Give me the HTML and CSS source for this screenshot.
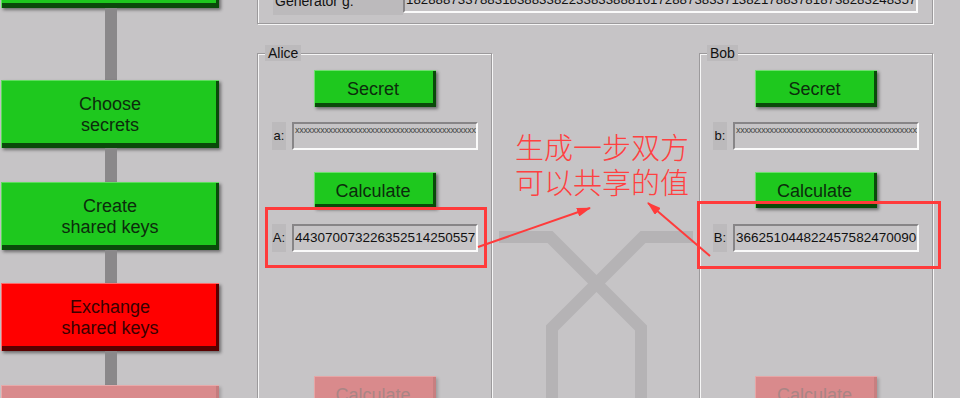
FILE: index.html
```html
<!DOCTYPE html>
<html lang="en">

<head>
  <meta charset="UTF-8">
  <title>Diffie-Hellman key exchange</title>
  <link rel="stylesheet" href="styles.css">
</head>

<body>
  <div class="app">
    <nav class="steps">
      <div class="step">Public<br>parameters</div>
      <div class="link link-long"></div>
      <div class="step">Choose<br>secrets</div>
      <div class="link"></div>
      <div class="step">Create<br>shared keys</div>
      <div class="link link-short"></div>
      <div class="step step-red">Exchange<br>shared keys</div>
      <div class="link"></div>
      <div class="step step-off">Calculate<br>final key</div>
    </nav>

    <main class="main">
      <div class="params frame">
        <span class="tag tag-wide">Generator g:</span>
        <div class="field field-wide">182888733788318388338223383388816172887383371382178837818738283248357</div>
      </div>

      <div class="parties">
        <fieldset class="party frame">
          <legend>Alice</legend>
          <div class="party-body">
            <button class="btn">Secret</button>
            <div class="row">
              <span class="tag">a:</span>
              <div class="field mask">xxxxxxxxxxxxxxxxxxxxxxxxxxxxxxxxxxxxxxxxxxxx</div>
            </div>
            <button class="btn btn-calc">Calculate</button>
            <div class="row row-key">
              <span class="tag">A:</span>
              <div class="field">443070073226352514250557</div>
            </div>
            <button class="btn btn-off">Calculate</button>
          </div>
        </fieldset>

        <div class="swap">
          <p class="note">生成一步双方<br>可以共享的值</p>
          <svg class="cross" width="207" height="180" viewBox="0 0 207 180">
            <path d="M7 12 H58 L149 103 V180" />
            <path d="M201 12 H151 L60 103 V180" />
          </svg>
        </div>

        <fieldset class="party party-bob frame">
          <legend>Bob</legend>
          <div class="party-body">
            <button class="btn">Secret</button>
            <div class="row">
              <span class="tag">b:</span>
              <div class="field mask">xxxxxxxxxxxxxxxxxxxxxxxxxxxxxxxxxxxxxxxxxxxx</div>
            </div>
            <button class="btn btn-calc">Calculate</button>
            <div class="row row-key">
              <span class="tag">B:</span>
              <div class="field">366251044822457582470090</div>
            </div>
            <button class="btn btn-off">Calculate</button>
          </div>
        </fieldset>
      </div>
    </main>
  </div>

  <!-- annotation layer drawn on top of the screenshot -->
  <svg class="marks" width="960" height="398" viewBox="0 0 960 398">
    <defs>
      <marker id="head" markerUnits="userSpaceOnUse" markerWidth="14" markerHeight="9" refX="13" refY="4.5" orient="auto">
        <path d="M0 0 L14 4.5 L0 9 z" fill="#ff3b3b" />
      </marker>
    </defs>
    <rect x="266.5" y="208.5" width="219" height="58" />
    <rect x="698.5" y="202.5" width="241" height="65" />
    <line x1="478" y1="247" x2="590" y2="208" marker-end="url(#head)" />
    <line x1="710" y1="256" x2="648" y2="203" marker-end="url(#head)" />
  </svg>
</body>

</html>
```

FILE: styles.css
```css
body {
  margin: 0;
  height: 398px;
  overflow: hidden;
  position: relative;
  background-color: #c6c4c6;
  font-family: "Liberation Sans", Arial, sans-serif;
  color: #111;
}

.app {
  display: flex;
  align-items: flex-start;
}

/* left column: the steps of the exchange */
.steps {
  flex-shrink: 0;
  width: 219px;
  margin: -60px 0 0 1px;
  display: flex;
  flex-direction: column;
}

.step {
  box-sizing: border-box;
  width: 218px;
  height: 68px;
  padding-top: 2px;
  display: flex;
  align-items: center;
  justify-content: center;
  text-align: center;
  font-size: 18px;
  line-height: 21px;
  color: #0c2c0c;
  background-color: #1ec81e;
  box-shadow: inset 1px 1px 0 #5ede5e, inset -3px -5px 0 #0a4a0a, 2px 2px 3px rgba(0, 0, 0, 0.45);
}

.step-red {
  color: #3a0000;
  background-color: #ff0000;
  box-shadow: inset 1px 1px 0 #ff6a6a, inset -3px -5px 0 #5a0000, 2px 2px 3px rgba(0, 0, 0, 0.45);
}

.step-off {
  color: #a88686;
  background-color: #d98a8c;
  box-shadow: inset 1px 1px 0 #e8aaaa, inset -3px -5px 0 #c47c7e, 2px 2px 3px rgba(0, 0, 0, 0.2);
}

.link {
  width: 12px;
  height: 34px;
  margin-left: 104px;
  background-color: #8a888a;
}

.link-long {
  height: 72px;
}

.link-short {
  height: 33px;
}

/* right part */
.main {
  flex-shrink: 0;
  width: 676px;
  margin-left: 37px;
}

.frame {
  border: 1px solid #9c9a9c;
  box-shadow: inset 1px 1px 0 #f6f6f6, 1px 1px 0 #f6f6f6;
}

.params {
  box-sizing: border-box;
  height: 64px;
  margin-top: -40px;
  padding: 0 13px 10px 15px;
  display: flex;
  align-items: flex-end;
}

.tag {
  flex-shrink: 0;
  width: 14px;
  height: 28px;
  background-color: #bcbabc;
  font-size: 13px;
  line-height: 28px;
  text-align: center;
}

.tag-wide {
  width: 128px;
  height: 30px;
  margin-bottom: -2px;
  padding-left: 2px;
  font-size: 14px;
  line-height: 32px;
  text-align: left;
}

.field {
  box-sizing: border-box;
  width: 186px;
  height: 28px;
  padding: 0 1px;
  border: 2px solid;
  border-color: #878587 #fafafa #fafafa #878587;
  background-color: #c6c4c6;
  font-size: 13.5px;
  line-height: 24px;
  white-space: nowrap;
  overflow: hidden;
}

.field-wide {
  width: 515px;
  height: 27px;
  font-size: 13.3px;
  line-height: 23px;
}

.mask {
  padding-top: 1px;
  font-size: 9px;
  line-height: 10px;
  letter-spacing: -0.3px;
  color: #444;
}

.parties {
  display: flex;
  margin-top: 21px;
}

.party {
  box-sizing: border-box;
  flex-shrink: 0;
  width: 235px;
  min-width: 0;
  height: 400px;
  margin: 0;
  padding: 0;
}

.party-bob {
  width: 234px;
}

.party legend {
  margin-left: 7px;
  padding: 0 3px;
  background-color: #bcbabc;
  font-size: 14px;
  line-height: 16px;
}

.party-body {
  display: flex;
  flex-direction: column;
  align-items: center;
}

.btn {
  box-sizing: border-box;
  width: 122px;
  height: 37px;
  margin-top: 9px;
  padding: 3px 3px 1px 0;
  border: none;
  font-family: "Liberation Sans", Arial, sans-serif;
  font-size: 18px;
  line-height: 21px;
  color: #0c2c0c;
  background-color: #1ec81e;
  box-shadow: inset 1px 1px 0 #6ee06e, inset -3px -4px 0 #0a4a0a, 2px 2px 3px rgba(0, 0, 0, 0.45);
}

.btn-calc {
  height: 36px;
  margin-top: 22px;
}

.btn-off {
  margin-top: 124px;
  color: #a98585;
  background-color: #d98a8c;
  box-shadow: inset 1px 1px 0 #e6a6a6, inset -3px -4px 0 #c77f80, 2px 2px 3px rgba(0, 0, 0, 0.2);
}

.row {
  align-self: stretch;
  display: flex;
  gap: 6px;
  margin-top: 15px;
  padding-left: 14px;
}

.party-bob .row {
  padding-left: 13px;
}

.row-key {
  margin-top: 16px;
}

/* middle column: the note and the crossing pipes */
.swap {
  flex-shrink: 0;
  width: 207px;
}

.note {
  margin: 84px 0 0;
  padding-left: 23px;
  font-family: "Noto Sans CJK SC", sans-serif;
  font-weight: 300;
  font-size: 29px;
  line-height: 35px;
  color: #ff4040;
}

.cross {
  display: block;
  margin-top: 26px;
}

.cross path {
  fill: none;
  stroke: #b5b3b5;
  stroke-width: 12;
}

.marks {
  position: absolute;
  left: 0;
  top: 0;
  pointer-events: none;
}

.marks rect {
  fill: none;
  stroke: #ff3b3b;
  stroke-width: 3;
}

.marks line {
  stroke: #ff3b3b;
  stroke-width: 2;
}
```
